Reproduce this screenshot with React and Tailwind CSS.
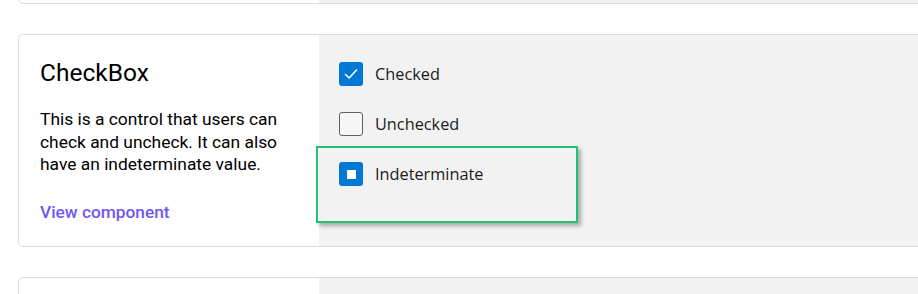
import React from "react";

const Card = ({ className = "", children }) => (
  <div className={`flex w-[1100px] h-[213px] border border-[#dcdcdc] rounded-[5px] overflow-hidden bg-white ${className}`}>
    {children}
  </div>
);

const Box = ({ state }) => {
  if (state === "checked") {
    return (
      <div className="w-[24px] h-[24px] rounded-[3px] bg-[#0078d4] flex items-center justify-center">
        <svg width="16" height="16" viewBox="0 0 16 16" fill="none">
          <path d="M2.5 8.5 L6.2 12 L13.5 4" stroke="white" strokeWidth="1.6" strokeLinecap="round" strokeLinejoin="round" />
        </svg>
      </div>
    );
  }
  if (state === "indeterminate") {
    return (
      <div className="w-[24px] h-[24px] rounded-[3px] bg-[#0078d4] flex items-center justify-center">
        <div className="w-[9px] h-[9px] bg-white" />
      </div>
    );
  }
  return <div className="w-[24px] h-[24px] rounded-[3px] border border-[#5f5f5f] bg-[#f7f7f7]" />;
};

const Row = ({ state, label }) => (
  <div className="flex items-center gap-[12px] h-[26px]">
    <Box state={state} />
    <span className="text-[16.3px] text-[#1b1b1b] font-['Open_Sans',sans-serif]">{label}</span>
  </div>
);

export default function App() {
  return (
    <div className="w-[918px] h-[294px] overflow-hidden bg-white pl-[18px] flex flex-col gap-[30px]">
      <Card className="-mt-[209px] shrink-0">
        <div className="w-[300px]" />
        <div className="flex-1 bg-[#f2f2f2]" />
      </Card>

      <Card className="shrink-0">
        <div className="w-[300px] shrink-0 pl-[21px] pt-[22px] font-['Roboto',sans-serif]">
          <h2 className="text-[24.5px] leading-[32px] text-black">CheckBox</h2>
          <p className="mt-[19px] text-[17.4px] leading-[22.5px] text-black w-[262px]">
            This is a control that users can check and uncheck. It can also have an indeterminate value.
          </p>
          <a href="#" className="block mt-[24px] text-[17.3px] font-medium text-[#6e57f7]">
            View component
          </a>
        </div>
        <div className="relative flex-1 bg-[#f2f2f2] pl-[20px] pt-[26px] flex flex-col gap-[24px]">
          <Row state="checked" label="Checked" />
          <Row state="unchecked" label="Unchecked" />
          <Row state="indeterminate" label="Indeterminate" />
          <div className="absolute left-[-3px] top-[111px] w-[262px] h-[77px] border-2 border-[#1fc46b] shadow-[3px_3px_4px_rgba(0,0,0,0.3)]" />
        </div>
      </Card>

      <Card className="shrink-0">
        <div className="w-[300px]" />
        <div className="flex-1 bg-[#f2f2f2]" />
      </Card>
    </div>
  );
}
